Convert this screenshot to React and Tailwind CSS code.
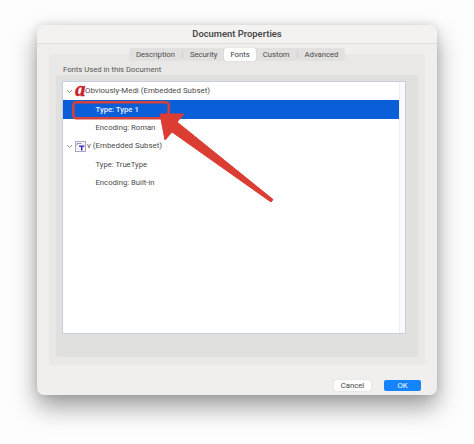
import React from "react";

function Chevron() {
  return (
    <svg width="7" height="5" viewBox="0 0 7 5" className="shrink-0">
      <path d="M1 1 L3.5 3.6 L6 1" fill="none" stroke="#8a8a8a" strokeWidth="1" />
    </svg>
  );
}

function TrueTypeIcon() {
  return (
    <svg width="11" height="11" viewBox="0 0 11 11" className="shrink-0">
      <rect x="0.5" y="0.5" width="10" height="10" fill="#f4f4f9" stroke="#a9a9bb" strokeWidth="1" />
      <path d="M2 2.5h4.5M2 2.5v2" stroke="#8d8da6" strokeWidth="0.9" fill="none" />
      <path d="M4 4.5 H9.4 V5.8 H7.4 V9.6 H6 V5.8 H4 Z" fill="#2a22c4" />
    </svg>
  );
}

function Tab({ label, active, divider }) {
  return (
    <div className="relative flex h-full items-center">
      {divider && <div className="h-[7px] w-px bg-[#cfcfcf]" />}
      <div
        className={
          active
            ? "flex h-full items-center rounded-[2px] bg-white px-[6px] text-[#3a3a3a] shadow-[0_0_1px_rgba(0,0,0,0.25)]"
            : "flex h-full items-center px-[7px] text-[#4a4a4a]"
        }
      >
        {label}
      </div>
    </div>
  );
}

function Row({ children, selected, indent }) {
  return (
    <div
      className={
        "flex h-[18.3px] items-center " +
        (selected ? "bg-[#0a5fd8] font-medium text-[#eaf2ff] " : "text-[#4a4a4a] ") +
        (indent ? "pl-[32.5px]" : "pl-[3px]")
      }
    >
      {children}
    </div>
  );
}

export default function App() {
  return (
    <div className="relative h-[444px] w-[474px] overflow-hidden bg-[#fdfdfd] pl-[37px] pt-[25px] font-['Roboto','Liberation_Sans',sans-serif] text-[7.7px]">
      <div className="flex h-[370px] w-[400px] flex-col rounded-[7px] bg-[#f0efed] shadow-[0_12px_24px_rgba(0,0,0,0.38),0_0_8px_rgba(0,0,0,0.12)]">
        <div className="flex h-[19px] shrink-0 items-center justify-center rounded-t-[7px] border-b border-[#dedddb] bg-[#f3f2f0] pt-[1px] text-[9.4px] font-semibold text-[#4a4a4a]">
          Document Properties
        </div>
        <div className="relative mx-[12px] mt-[10px] h-[311px] rounded-[3px] bg-[#e9e8e6] px-[7px]">
          <div className="absolute left-[80px] top-[-6px] flex h-[13px] items-center rounded-[3px] bg-[#e2e1df]">
            <Tab label="Description" />
            <Tab label="Security" divider />
            <Tab label="Fonts" active />
            <Tab label="Custom" />
            <Tab label="Advanced" divider />
          </div>
          <div className="flex h-[21px] items-end pl-[7px] text-[#555555]">
            <span className="translate-y-[1px]">Fonts Used in this Document</span>
          </div>
          <div className="h-[282px] rounded-[2px] bg-[#e0e0df] p-[6px]">
            <div className="flex h-[253px] w-[344px] border border-[#c6cfdf] bg-white">
              <div className="flex-1">
                <Row>
                  <Chevron />
                  <span className="ml-[2px] w-[10px] -translate-y-[2px] text-center font-['Liberation_Serif',serif] text-[21px] leading-none font-bold text-[#c8232c] italic [-webkit-text-stroke:0.4px_#c8232c]">
                    a
                  </span>
                  <span className="text-[7.9px]">Obviously-Medi (Embedded Subset)</span>
                </Row>
                <Row selected indent>Type: Type 1</Row>
                <Row indent>Encoding: Roman</Row>
                <Row>
                  <Chevron />
                  <span className="ml-[2px] mr-[1px] flex">
                    <TrueTypeIcon />
                  </span>
                  <span className="text-[7.9px]">v (Embedded Subset)</span>
                </Row>
                <Row indent>Type: TrueType</Row>
                <Row indent>Encoding: Built-in</Row>
              </div>
              <div className="w-[6px] border-l border-[#eeeeee] bg-[#fafafa]" />
            </div>
          </div>
        </div>
        <div className="flex flex-1 items-start justify-end gap-[13px] pr-[16px] pt-[15px]">
          <button className="flex h-[11px] w-[37px] items-center justify-center rounded-[2px] bg-white text-[#444444] shadow-[0_0_1px_rgba(0,0,0,0.3)]">
            Cancel
          </button>
          <button className="flex h-[11px] w-[37px] items-center justify-center rounded-[2px] bg-[#1583fa] text-white">
            OK
          </button>
        </div>
      </div>

      <svg width="474" height="444" viewBox="0 0 474 444" className="pointer-events-none absolute left-0 top-0">
        <rect x="73.3" y="102.3" width="95.5" height="16" rx="3" fill="none" stroke="#d4403a" strokeWidth="2.6" />
        <path
          d="M160 114 L184 114 L177 122 L273 199.5 L271 202 L172 132 L165 140 Z"
          fill="#dc3d33"
          stroke="#dc3d33"
          strokeWidth="1"
          strokeLinejoin="round"
        />
      </svg>
    </div>
  );
}
